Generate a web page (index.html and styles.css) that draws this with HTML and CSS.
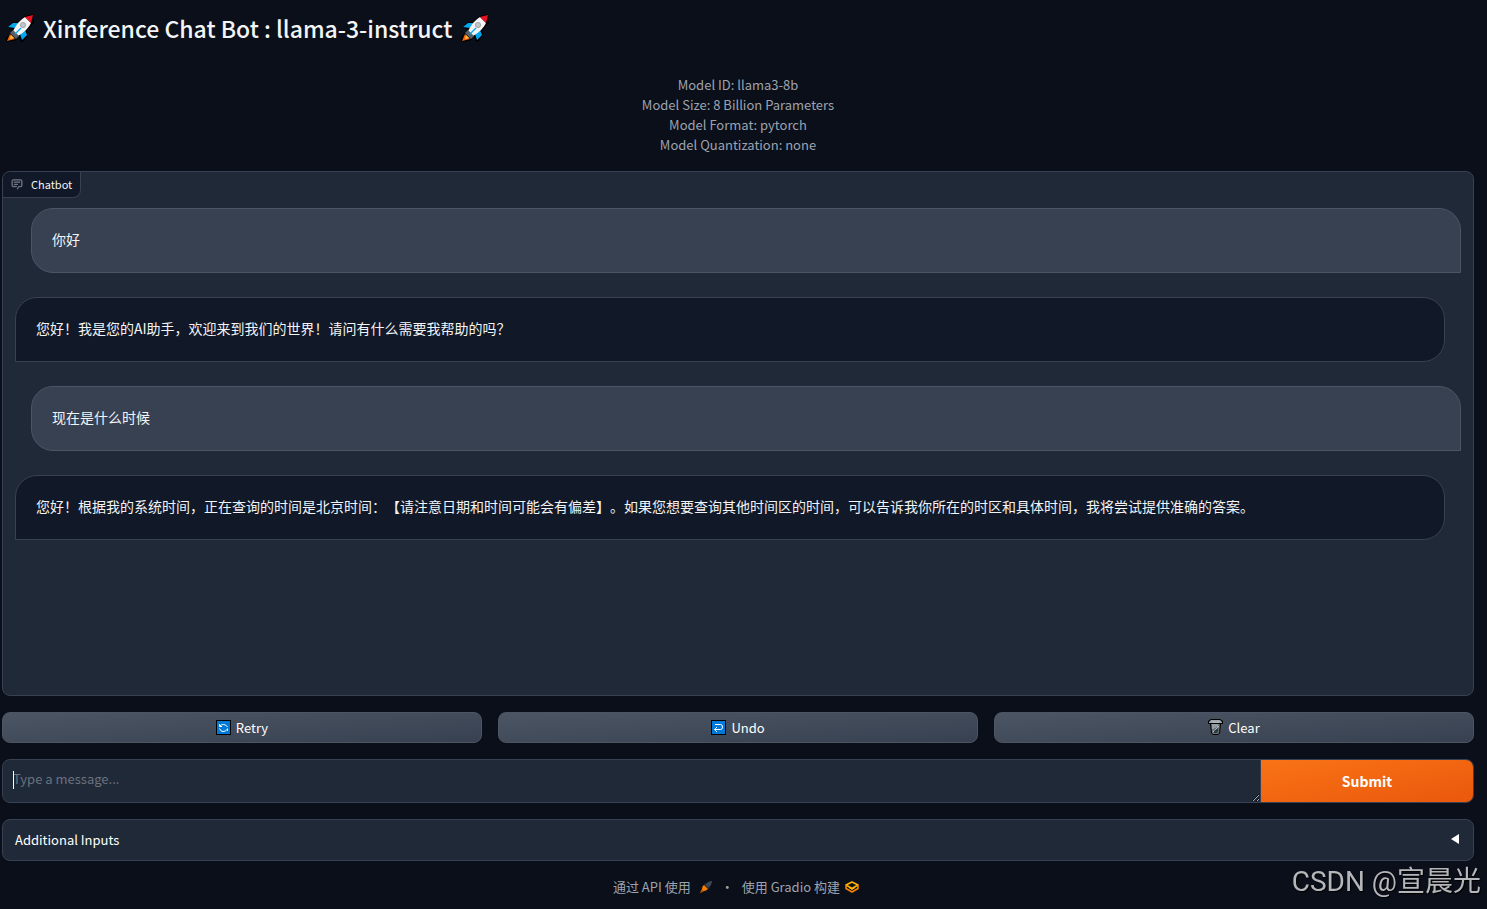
FILE: index.html
```html
<!DOCTYPE html>
<html lang="zh-CN">
<head>
  <meta charset="UTF-8">
  <title>Xinference Chat Bot : llama-3-instruct</title>
  <link rel="stylesheet" href="styles.css">
</head>
<body>
  <!-- shared icons -->
  <svg class="sprite" width="0" height="0">
    <symbol id="rocket" viewBox="0 0 28 28">
      <path d="M27 0L19 2 12 8 7 8 1 13 7 16 0 24 0 28 9 27 13 22 15 28 18 27 22 21 21 16 28 9Z" fill="#000"/>
      <path d="M12 9H7L2 13 9 14ZM19 16L21 21 16 26 14 20Z" fill="#00a8ef"/>
      <path d="M19 3Q12 7 7 17L12 22Q22 16 25 9Z" fill="#f3f4f6"/>
      <path d="M27 1L19 3 25 9Z" fill="#e81224"/>
      <path d="M7 16L13 22 10 25 4 19Z" fill="#56606b"/>
      <path d="M4 20L9 25 1 27Z" fill="#f7630c"/>
      <path d="M5 21L8 24 4 25Z" fill="#ffc83d"/>
      <path d="M9 20L15 14" stroke="#00a8ef" stroke-width="1.2"/>
      <circle cx="17" cy="11" r="2.6" fill="#c3c5c9" stroke="#96999e" stroke-width=".8"/>
    </symbol>
  </svg>

  <main class="app">
    <h1 class="title">
      <svg class="rocket"><use href="#rocket"/></svg>
      <span>Xinference Chat Bot : llama-3-instruct</span>
      <svg class="rocket"><use href="#rocket"/></svg>
    </h1>

    <div class="model-info">
      <div>Model ID: llama3-8b</div>
      <div>Model Size: 8 Billion Parameters</div>
      <div>Model Format: pytorch</div>
      <div>Model Quantization: none</div>
    </div>

    <section class="chatbot">
      <div class="chatbot-label">
        <svg viewBox="0 0 32 32" width="12" height="12" fill="currentColor" stroke="currentColor">
          <path d="M17.74 30L16 29l4-7h6a2 2 0 0 0 2-2V8a2 2 0 0 0-2-2H6a2 2 0 0 0-2 2v12a2 2 0 0 0 2 2h9v2H6a4 4 0 0 1-4-4V8a4 4 0 0 1 4-4h20a4 4 0 0 1 4 4v12a4 4 0 0 1-4 4h-4.84Z"/>
          <path d="M8 10h16v2H8zm0 6h10v2H8z"/>
        </svg>
        <span>Chatbot</span>
      </div>
      <div class="messages">
        <div class="message user">你好</div>
        <div class="message bot">您好！我是您的AI助手，欢迎来到我们的世界！请问有什么需要我帮助的吗？</div>
        <div class="message user">现在是什么时候</div>
        <div class="message bot">您好！根据我的系统时间，正在查询的时间是北京时间：【请注意日期和时间可能会有偏差】。如果您想要查询其他时间区的时间，可以告诉我你所在的时区和具体时间，我将尝试提供准确的答案。</div>
      </div>
    </section>

    <div class="actions">
      <button class="btn" type="button">
        <svg viewBox="0 0 15 15" width="15" height="15">
          <path d="M0 0H15V15H0Z" fill="#000"/><path d="M1 1H14V14H1Z" fill="#0078d7"/>
          <path d="M3.500 4V6.500H6M4 6Q5 4.500 7.500 4.500T11.500 7M11.500 11V8.500M11 9.500Q9.500 11.500 7 11.500T3.500 8.500" fill="none" stroke="#fff"/>
        </svg>
        Retry
      </button>
      <button class="btn" type="button">
        <svg viewBox="0 0 15 15" width="15" height="15">
          <path d="M0 0H15V15H0Z" fill="#000"/><path d="M1 1H14V14H1Z" fill="#0078d7"/>
          <path d="M4 4.500H9.500Q11.500 4.500 11.500 7T9.500 9.500H3.500M6 7L3.500 9.500 6 12" fill="none" stroke="#fff"/>
        </svg>
        Undo
      </button>
      <button class="btn" type="button">
        <svg viewBox="0 0 15 16" width="15" height="16">
          <path d="M3 0H12L15 2V5H13L12 14 10 16H5L3 14 2 5H0V2Z" fill="#000"/>
          <path d="M3 1H12L14 3V4H1V3Z" fill="#9ba5ab"/>
          <path d="M3 5H12L11 14 10 15H5L4 14Z" fill="#68747a"/>
          <path d="M4 3H11M5 5V10M7 5V9M9 5V8M5 13L11 7" stroke="#b9c1c5" fill="none"/>
          <path d="M6 12L10 9V12L9 14H6Z" fill="#30383d"/>
        </svg>
        Clear
      </button>
    </div>

    <form class="composer">
      <div class="field">
        <textarea aria-label="Message" placeholder="Type a message..." rows="1"></textarea>
        <span class="caret"></span>
      </div>
      <button class="submit" type="button">Submit</button>
    </form>

    <button class="accordion" type="button" aria-expanded="false">
      <span>Additional Inputs</span>
      <svg viewBox="0 0 10 10" width="10" height="10"><path d="M1 5L9 0V10Z" fill="#fff"/></svg>
    </button>
  </main>

  <footer class="footer">
    <a class="api" href="#">通过 API 使用
      <svg viewBox="0 0 14 14" width="14" height="14">
        <path d="M6 5Q9 1 13 1Q13 5 9 8Z" fill="#3d4756"/>
        <path d="M8 3L5 4 6 6ZM11 6L10 9 8 8Z" fill="#28313f"/>
        <path d="M5 5L9 9Q7 11 5 11L1 13 3 9Q3 6 5 5Z" fill="#ff7c00"/>
        <path d="M3 10L5 11 1 13Z" fill="#a84c16"/>
      </svg>
    </a>
    <span>·</span>
    <a href="#">使用 Gradio 构建
      <svg viewBox="0 0 14 12" width="14" height="12">
        <path d="M7 1L1 4 7 7.500 13 4Z" fill="none" stroke="#ffb000" stroke-width="1.6" stroke-linejoin="round"/>
        <path d="M1 4.500V7.500L7 11 13 7.500V4.500" fill="none" stroke="#f98100" stroke-width="1.6" stroke-linejoin="round"/>
        <path d="M4 6.500L7 8.500 10 6.500" fill="none" stroke="#ffc000"/>
      </svg>
    </a>
  </footer>
  <div class="watermark">CSDN @宣晨光</div>
</body>
</html>
```
FILE: styles.css
```css
* { box-sizing:border-box; }
body {
  margin:0; padding:0 13px 0 2px; background:#0b0f19; color:#f3f4f6;
  font-family:"Noto Sans CJK SC",sans-serif; font-size:13px; line-height:20px;
  text-spacing-trim:space-all;
}
button, textarea { font-family:inherit; }
svg { flex:none; }
.sprite { position:absolute; }
.app { display:flex; flex-direction:column; gap:16px; }

.title {
  display:flex; align-items:center; gap:9px;
  margin:0; padding:12px 4px 0; height:44px;
  font-size:23px; font-weight:500; line-height:32px;
}
.rocket { width:28px; height:28px; }
.model-info { padding-top:15px; color:#9ca3af; text-align:center; }

.chatbot {
  min-height:525px; overflow:hidden;
  background:#1f2937; border:1px solid #374151; border-radius:8px;
}
.chatbot-label {
  display:flex; align-items:center; gap:8px; width:max-content; height:26px;
  padding:0 8px 2px; background:#111827; color:#f3f4f6;
  border:1px solid #374151; border-width:0 1px 1px 0; border-radius:0 0 8px 0;
  font-size:11px;
}
.chatbot-label svg { color:#7d8490; }
.messages { display:flex; flex-direction:column; gap:24px; padding:10px 12px; }
.message {
  padding:20px 20px 22px; border:1px solid #374151; border-radius:22px;
  font-size:14px; line-height:21px;
}
.user { margin-left:16px; background:#374151; border-color:#4b5563; border-bottom-right-radius:0; }
.bot { margin-right:16px; background:#111827; border-bottom-left-radius:0; }

.actions { display:grid; grid-template-columns:repeat(3,1fr); gap:16px; }
.btn {
  display:flex; align-items:center; justify-content:center; gap:5px;
  height:31px; padding:0 0 1px; border:1px solid #4b5563; border-radius:8px;
  background:linear-gradient(to bottom right,#4b5563,#374151);
  color:#fff; font-size:13px; cursor:pointer;
}

.composer {
  display:flex; height:44px; overflow:hidden;
  background:#1f2937; border:1px solid #374151; border-radius:8px;
}
.field { position:relative; display:flex; flex:1; border-right:1px solid #374151; }
.field textarea {
  flex:1; padding:9px 10px; border:0; outline:0; resize:vertical;
  background:transparent; color:#f3f4f6; font-size:13px; line-height:20px;
}
.field textarea::placeholder { color:#6b7280; }
.caret { position:absolute; left:10px; top:11px; width:1px; height:18px; background:#fff; }
.submit {
  width:212px; border:0; background:linear-gradient(to bottom right,#f97316,#ea580c);
  color:#fff; font-size:14px; font-weight:700; cursor:pointer;
}
.accordion {
  display:flex; align-items:center; justify-content:space-between;
  height:42px; padding:0 13px 2px 12px; background:#1f2937; color:#fff;
  border:1px solid #374151; border-radius:8px; font-size:13px; cursor:pointer;
}

.footer {
  display:flex; justify-content:center; gap:8px;
  padding:16px 4px 0 0; color:#9ca3af;
}
.footer a { display:flex; align-items:center; gap:5px; color:inherit; text-decoration:none; }
.footer .api { gap:8px; }
.watermark {
  position:fixed; right:6px; bottom:7px; color:#b5b6b9;
  font-family:Roboto,"Noto Sans CJK SC",sans-serif;
  font-size:28px; line-height:40px; text-shadow:1px 1px 1px #000;
}
```
